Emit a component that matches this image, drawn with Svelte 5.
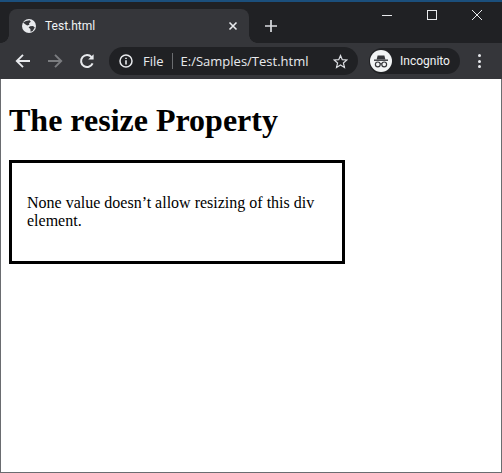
<script>
  const pageTitle = 'The resize Property';
  const boxText = 'None value doesn’t allow resizing of this div element.';
</script>

<div class="window">
  <div class="titlebar">
    <div class="tab">
      <svg class="favicon" width="16" height="16" viewBox="0 0 16 16">
        <circle cx="8" cy="8" r="7" fill="#e8eaed" />
        <path d="M2 4.5 L5 3 L8.6 2.2 L9.8 3.8 L8 5.2 L8.4 6.8 L6.2 7.6 L4.6 6.4 Z M9 8.2 L12 8 L13.8 9.6 L11.6 13 L9.6 13.8 L9.4 11 L7.6 9.6 Z" fill="#35363a" />
      </svg>
      <span class="tab-title">Test.html</span>
      <svg class="tab-close" width="10" height="10" viewBox="0 0 10 10">
        <path d="M1.5 1.5 L8.5 8.5 M8.5 1.5 L1.5 8.5" stroke="#e8eaed" stroke-width="1.6" />
      </svg>
    </div>
    <svg class="new-tab" width="14" height="14" viewBox="0 0 14 14">
      <path d="M7 1 V13 M1 7 H13" stroke="#dadce0" stroke-width="1.7" />
    </svg>
    <div class="window-controls">
      <svg width="12" height="12" viewBox="0 0 12 12"><path d="M1 6.5 H11" stroke="#e8eaed" stroke-width="1" /></svg>
      <svg width="12" height="12" viewBox="0 0 12 12"><rect x="1.5" y="1.5" width="9" height="9" fill="none" stroke="#e8eaed" stroke-width="1" /></svg>
      <svg width="12" height="12" viewBox="0 0 12 12"><path d="M1 1 L11 11 M11 1 L1 11" stroke="#e8eaed" stroke-width="1" /></svg>
    </div>
  </div>

  <div class="toolbar">
    <svg class="nav" width="16" height="16" viewBox="0 0 16 16">
      <path d="M15 8 H2 M8 1.8 L1.8 8 L8 14.2" fill="none" stroke="#e8eaed" stroke-width="1.9" />
    </svg>
    <svg class="nav" width="16" height="16" viewBox="0 0 16 16">
      <path d="M1 8 H14 M8 1.8 L14.2 8 L8 14.2" fill="none" stroke="#7b7d80" stroke-width="1.9" />
    </svg>
    <svg class="nav" width="16" height="16" viewBox="0 0 16 16">
      <path d="M13.6 10.4 A6 6 0 1 1 12.6 4.1" fill="none" stroke="#e8eaed" stroke-width="2" />
      <path d="M14.6 1.2 V6.6 H9.2 Z" fill="#e8eaed" />
    </svg>

    <div class="omnibox">
      <svg width="14" height="14" viewBox="0 0 14 14">
        <circle cx="7" cy="7" r="6" fill="none" stroke="#e8eaed" stroke-width="1.5" />
        <path d="M7 6.2 V10.4 M7 3.7 V5" stroke="#e8eaed" stroke-width="1.6" />
      </svg>
      <span class="scheme">File</span>
      <span class="divider"></span>
      <span class="url">E:/Samples/Test.html</span>
      <svg class="star" width="15" height="15" viewBox="0 0 16 16">
        <path d="M8 1.6 L9.9 6 L14.7 6.4 L11.1 9.6 L12.2 14.3 L8 11.8 L3.8 14.3 L4.9 9.6 L1.3 6.4 L6.1 6 Z" fill="none" stroke="#dadce0" stroke-width="1.3" />
      </svg>
    </div>

    <div class="profile">
      <svg width="22" height="22" viewBox="0 0 22 22">
        <circle cx="11" cy="11" r="11" fill="#f1f3f4" />
        <path d="M7.6 5.4 H14.4 L15.4 9.4 H6.6 Z" fill="#35363a" />
        <path d="M4 10.2 H18" stroke="#35363a" stroke-width="1.4" />
        <circle cx="7.8" cy="14.4" r="2.4" fill="none" stroke="#35363a" stroke-width="1.2" />
        <circle cx="14.2" cy="14.4" r="2.4" fill="none" stroke="#35363a" stroke-width="1.2" />
        <path d="M10 13.8 H12" stroke="#35363a" stroke-width="1.1" />
      </svg>
      <span>Incognito</span>
    </div>

    <div class="menu">
      <i></i><i></i><i></i>
    </div>
  </div>

  <div class="page">
    <h1>{pageTitle}</h1>
    <div class="resize-box">
      <p>{boxText}</p>
    </div>
  </div>
</div>

<style>
  :global(body) {
    margin: 0;
    background: #fff;
  }

  .window {
    width: 502px;
    height: 473px;
    box-sizing: border-box;
    display: flex;
    flex-direction: column;
    border-top: 2px solid #1b4f7c;
    overflow: hidden;
    font-family: "Open Sans", "Noto Sans", sans-serif;
  }

  .titlebar {
    height: 41px;
    flex-shrink: 0;
    display: flex;
    align-items: flex-end;
    background: #202124;
    padding-left: 9px;
  }

  .tab {
    position: relative;
    width: 240px;
    height: 34px;
    box-sizing: border-box;
    display: flex;
    align-items: center;
    padding: 0 11px 0 12px;
    background: #35363a;
    border-radius: 8px 8px 0 0;
  }

  /* curved feet on both sides of the active tab */
  .tab::before,
  .tab::after {
    content: '';
    position: absolute;
    bottom: 0;
    width: 8px;
    height: 8px;
  }

  .tab::before {
    left: -8px;
    background: radial-gradient(circle at 0 0, transparent 7.5px, #35363a 8px);
  }

  .tab::after {
    right: -8px;
    background: radial-gradient(circle at 100% 0, transparent 7.5px, #35363a 8px);
  }

  .favicon {
    flex-shrink: 0;
  }

  .tab-title {
    margin-left: 8px;
    flex: 1;
    color: #f1f3f4;
    font-family: Roboto, sans-serif;
    font-size: 12px;
  }

  .new-tab {
    margin: 0 0 10px 15px;
  }

  .window-controls {
    margin-left: auto;
    align-self: flex-start;
    display: flex;
    gap: 33px;
    padding: 7px 19px 0 0;
  }

  .toolbar {
    height: 36px;
    flex-shrink: 0;
    display: flex;
    align-items: center;
    background: #35363a;
    padding-left: 15px;
  }

  .nav {
    margin-right: 16px;
    flex-shrink: 0;
  }

  .omnibox {
    width: 249px;
    height: 28px;
    box-sizing: border-box;
    margin-left: -2px;
    display: flex;
    align-items: center;
    padding: 0 10px;
    background: #202124;
    border-radius: 14px;
    color: #e8eaed;
    font-size: 13px;
  }

  .scheme {
    margin-left: 10px;
  }

  .divider {
    width: 1px;
    height: 16px;
    margin: 0 8px;
    background: #6b6d70;
  }

  .url {
    flex: 1;
  }

  .profile {
    width: 91px;
    height: 26px;
    box-sizing: border-box;
    margin-left: 11px;
    display: flex;
    align-items: center;
    gap: 8px;
    padding-left: 1px;
    background: #202124;
    border-radius: 13px;
    color: #f1f3f4;
    font-family: Roboto, sans-serif;
    font-size: 12px;
  }

  .menu {
    margin-left: 18px;
    display: flex;
    flex-direction: column;
    gap: 2.5px;
  }

  .menu i {
    width: 3px;
    height: 3px;
    border-radius: 50%;
    background: #e8eaed;
  }

  .page {
    flex: 1;
    padding: 0 8px;
    background: #fff;
    border: 1px solid #6a6c70;
    border-top: none;
    color: #000;
    font-family: "Liberation Serif", serif;
  }

  h1 {
    margin: 23px 0 21px;
    font-size: 32px;
    font-weight: bold;
  }

  .resize-box {
    width: 300px;
    padding: 15px;
    border: 3px solid #000;
    font-size: 16px;
  }

  p {
    margin: 16px 0;
  }
</style>
